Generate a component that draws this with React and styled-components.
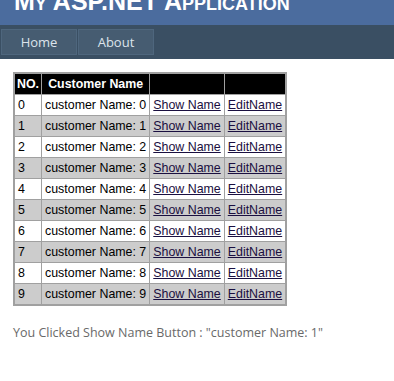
import React, { useState } from 'react';
import styled, { createGlobalStyle } from 'styled-components';

const GlobalStyle = createGlobalStyle`
  html, body {
    margin: 0;
    padding: 0;
    background: #fff;
  }
  body {
    font-family: "Open Sans", "Noto Sans", Arial, sans-serif;
    font-size: 12.8px;
    color: #696969;
  }
`;

const Header = styled.header`
  background-color: #4b6c9e;
  height: 25px;
  overflow: hidden;
`;

const Title = styled.h1`
  margin: -11px 0 0;
  padding-left: 14px;
  font-family: "Liberation Sans", Arial, sans-serif;
  font-size: 25px;
  font-weight: 700;
  font-variant: small-caps;
  color: #fff;
  line-height: 1;
  white-space: nowrap;
`;

const NavBar = styled.nav`
  background-color: #3a4f63;
  height: 34px;
  display: flex;
  align-items: flex-start;
  padding: 4px 0 0 1px;
  box-sizing: border-box;
`;

const NavItem = styled.a`
  display: flex;
  align-items: center;
  justify-content: center;
  width: 76px;
  height: 26px;
  box-sizing: border-box;
  background-color: #465c71;
  border: 1px solid #4e667d;
  margin-right: 1px;
  color: #dde4ec;
  font-size: 13px;
  text-decoration: none;
  cursor: pointer;
`;

const Main = styled.main`
  padding: 13px 13px 0;
`;

const Grid = styled.table`
  border-collapse: collapse;
  border: 2px solid #a0a0a0;
  font-family: "Liberation Sans", Arial, sans-serif;
  font-size: 12.4px;
  color: #000;
`;

const HeadCell = styled.th`
  background: #000;
  color: #fff;
  font-weight: 700;
  height: 20px;
  padding: 0 2px;
  border: 1px solid #a0a0a0;
  text-align: center;
`;

const Row = styled.tr`
  background: ${p => (p.$alt ? '#cccccc' : '#ffffff')};
`;

const Cell = styled.td`
  height: 20px;
  padding: 0 3px;
  border: 1px solid #a0a0a0;
  white-space: nowrap;
`;

const LinkButton = styled.a`
  color: #1a0f40;
  text-decoration: underline;
  cursor: pointer;
`;

const Message = styled.p`
  margin: 18px 0 0;
  font-size: 12.5px;
  color: #696969;
`;

const customers = Array.from({ length: 10 }, (_, i) => ({
  id: i,
  name: `customer Name: ${i}`,
}));

export default function App() {
  const [clicked, setClicked] = useState('customer Name: 1');

  return (
    <>
      <GlobalStyle />
      <Header>
        <Title>My ASP.NET Application</Title>
      </Header>
      <NavBar>
        <NavItem>Home</NavItem>
        <NavItem>About</NavItem>
      </NavBar>
      <Main>
        <Grid>
          <thead>
            <tr>
              <HeadCell>NO.</HeadCell>
              <HeadCell>Customer Name</HeadCell>
              <HeadCell />
              <HeadCell />
            </tr>
          </thead>
          <tbody>
            {customers.map(c => (
              <Row key={c.id} $alt={c.id % 2 === 1}>
                <Cell>{c.id}</Cell>
                <Cell>{c.name}</Cell>
                <Cell>
                  <LinkButton onClick={() => setClicked(c.name)}>Show Name</LinkButton>
                </Cell>
                <Cell>
                  <LinkButton>EditName</LinkButton>
                </Cell>
              </Row>
            ))}
          </tbody>
        </Grid>
        <Message>You Clicked Show Name Button : "{clicked}"</Message>
      </Main>
    </>
  );
}
